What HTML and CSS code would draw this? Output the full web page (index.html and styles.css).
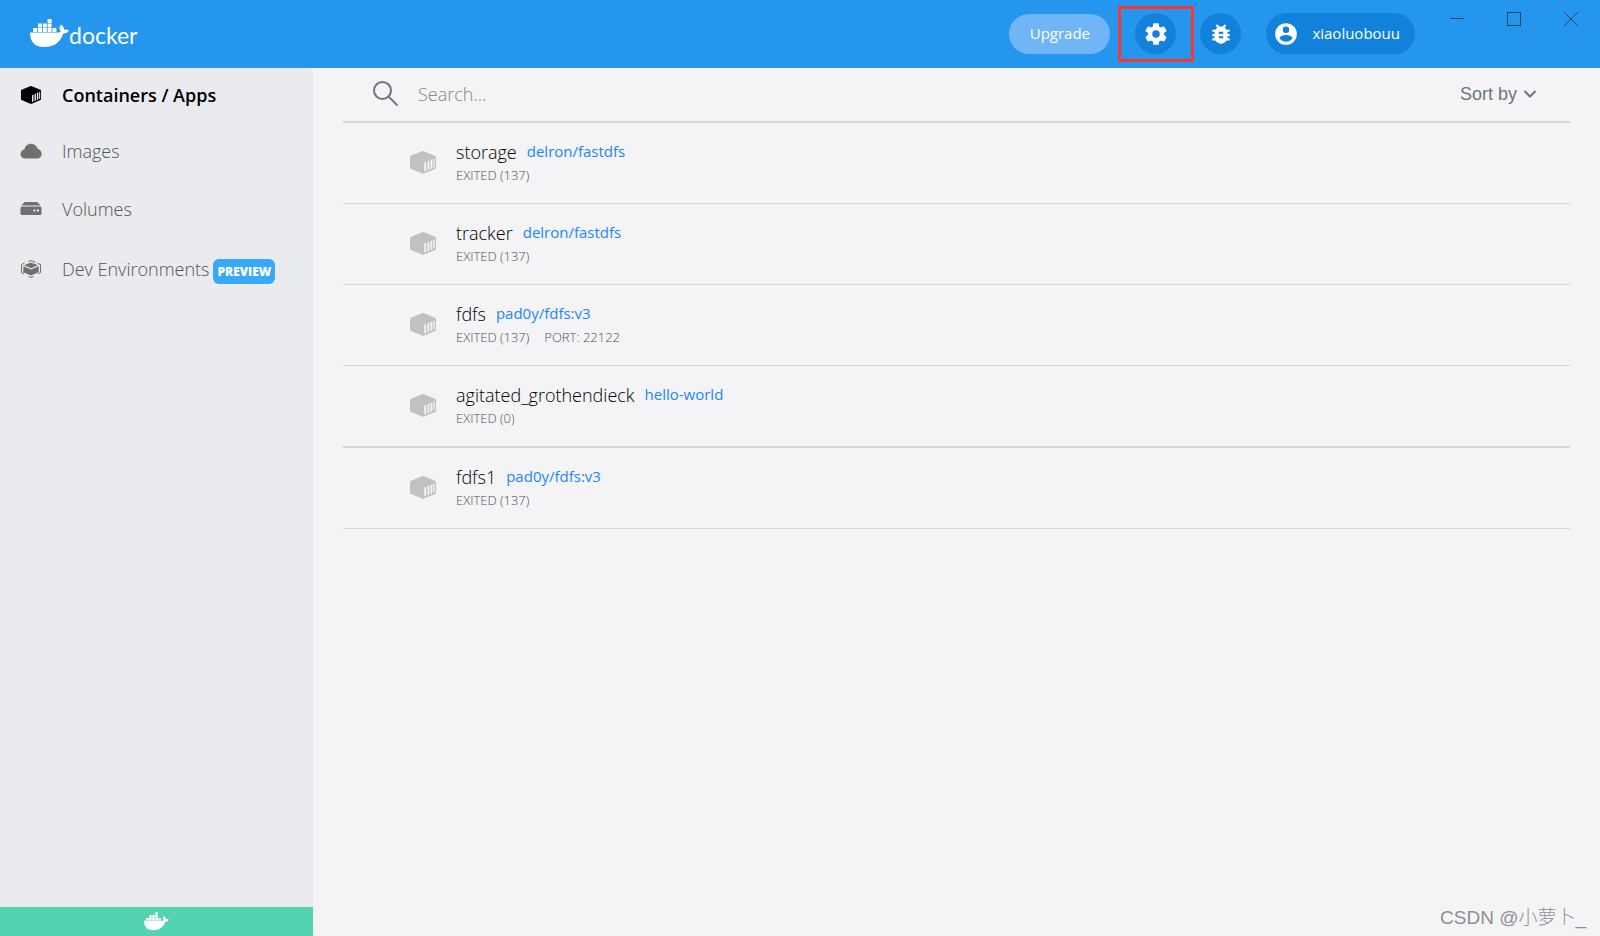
FILE: index.html
```html
<!DOCTYPE html>
<html lang="en">
<head>
<meta charset="utf-8">
<title>Docker Desktop</title>
<link rel="stylesheet" href="styles.css">
</head>
<body>
<svg class="defs" aria-hidden="true">
  <symbol id="whale" viewBox="0 0 39 29">
    <path d="M0 13.500h27.500c1.700 0 2.700-.5 3.300-1.100-1.700-2-1.600-4.700.1-6.800 2 1.400 3.100 3 3.200 5.100 1.700-.4 3.400-.1 4.900.9-1 2-2.900 2.900-5.600 2.900C30.200 23.800 23.700 28 14 28 4.800 28 0 23 0 13.500z"/>
    <path d="M3.200 9h4v4h-4zM8 9h4v4H8zM12.800 9h4v4h-4zM17.600 9h4v4h-4zM22.400 9h4v4h-4zM8 4.500h4v4H8zM12.800 4.500h4v4h-4zM17.600 4.500h4v4h-4zM17.600 0h4v4h-4z"/>
  </symbol>
  <symbol id="container" viewBox="0 0 26 23">
    <path fill-rule="evenodd" d="M12 .3a2.500 2.500 0 0 1 2 0l11 4.500q1 .5 1 1.500v10.200q0 1-1 1.500l-11 4.600a2.500 2.500 0 0 1-2 0L1 18q-1-.5-1-1.500V6.300q0-1 1-1.500zM14.300 11.700v8.800l1.800-.7V11zM17.500 10.400v8.800l1.800-.7V9.700zM20.500 9.100v8.800l1.800-.7V8.400zM23.400 7.900v8.700l1.300-.5V7.400z"/>
  </symbol>
</svg>
<header class="topbar">
  <a class="brand" href="#" aria-label="Docker home">
    <svg class="brand-whale"><use href="#whale"/></svg>
    <span class="brand-name">docker</span>
  </a>
  <div class="actions">
    <button class="upgrade">Upgrade</button>
    <div class="highlight">
      <button class="round" aria-label="Settings">
        <svg viewBox="0 0 24 24" class="gear"><path d="M19.430 12.980c.04-.32.07-.64.07-.98s-.03-.66-.07-.98l2.110-1.650c.19-.15.24-.42.12-.64l-2-3.460c-.12-.22-.39-.3-.61-.22l-2.490 1c-.52-.4-1.080-.73-1.690-.98l-.38-2.650C14.460 2.180 14.250 2 14 2h-4c-.25 0-.46.18-.49.42l-.38 2.650c-.61.25-1.170.59-1.690.98l-2.490-1c-.23-.09-.49 0-.61.22l-2 3.460c-.13.22-.07.49.12.64l2.110 1.650c-.04.32-.07.65-.07.98s.03.66.07.98l-2.110 1.650c-.19.15-.24.42-.12.64l2 3.460c.12.22.39.3.61.22l2.490-1c.52.4 1.080.73 1.690.98l.38 2.650c.03.24.24.42.49.42h4c.25 0 .46-.18.49-.42l.38-2.650c.61-.25 1.170-.59 1.690-.98l2.490 1c.23.09.49 0 .61-.22l2-3.460c.12-.22.07-.49-.12-.64zM12 15.500a3.500 3.500 0 1 1 0-7 3.500 3.500 0 0 1 0 7z"/></svg>
      </button>
    </div>
    <button class="round" aria-label="Troubleshoot">
      <svg viewBox="0 0 24 24" class="bug"><path d="M20 8h-2.810c-.45-.78-1.070-1.450-1.820-1.960L17 4.410 15.590 3l-2.170 2.170a6 6 0 0 0-2.830 0L8.410 3 7 4.410l1.620 1.630C7.880 6.550 7.260 7.220 6.810 8H4v2h2.090c-.05.33-.09.66-.09 1v1H4v2h2v1c0 .34.04.67.09 1H4v2h2.810a6 6 0 0 0 10.380 0H20v-2h-2.090c.05-.33.09-.66.09-1v-1h2v-2h-2v-1c0-.34-.04-.67-.09-1H20zm-6 8h-4v-2h4zm0-4h-4v-2h4z"/></svg>
    </button>
    <button class="account">
      <svg viewBox="0 0 24 24" class="avatar"><path d="M12 2a10 10 0 1 0 0 20 10 10 0 0 0 0-20zm0 3a3 3 0 1 1 0 6 3 3 0 0 1 0-6zm0 14.200a7.200 7.200 0 0 1-6-3.220c.03-1.990 4-3.080 6-3.080s5.970 1.090 6 3.080a7.200 7.200 0 0 1-6 3.220z"/></svg>
      <span>xiaoluobouu</span>
    </button>
  </div>
  <div class="window-controls">
    <button aria-label="Minimize"><svg viewBox="0 0 14 14"><path d="M0 6.500h14"/></svg></button>
    <button aria-label="Maximize"><svg viewBox="0 0 14 14"><path d="M.5.5h13v13H.5z"/></svg></button>
    <button aria-label="Close"><svg viewBox="0 0 14 14"><path d="M.5.5l13 13M13.500.5l-13 13"/></svg></button>
  </div>
</header>
<div class="body">
  <aside class="sidebar">
    <nav class="nav">
      <a class="nav-item active" href="#"><svg viewBox="0 0 26 23"><use href="#container"/></svg><span>Containers / Apps</span></a>
      <a class="nav-item" href="#"><svg viewBox="0 0 22 18"><path d="M5.200 16.500C2 16.500.5 14.400.5 12c0-2.300 1.500-4.100 3.900-4.500C5 4 7.600 1.800 11 1.800s5.800 2.100 6.700 5.100c2.500.4 3.900 2.400 3.900 4.800 0 2.700-1.800 4.800-4.800 4.800z"/></svg><span>Images</span></a>
      <a class="nav-item" href="#"><svg viewBox="0 0 22 18"><path d="M5.500 2h11q1 0 1.600.7L20.500 5.500h-19L3.900 2.700Q4.500 2 5.500 2z"/><path fill-rule="evenodd" d="M2 6.500h18q1.500 0 1.500 1.500v5.500q0 1.500-1.500 1.500H2q-1.500 0-1.500-1.500V8q0-1.500 1.500-1.500zm11.500 3v2h2v-2zm3.500 0v2h2v-2z"/></svg><span>Volumes</span></a>
      <a class="nav-item dev" href="#"><svg viewBox="0 0 22 18"><path d="M11 2.600l7 2.700-7 3-7-3zM3.300 6.200l7.700 3.300 7.700-3.300v6L11 15.600l-7.700-3.400z"/><path class="line" d="M4.500 3.200L1.500 4.600v8L4 13.800M17.500 3.200l3 1.400v8L18 13.800M8.500 1.500L11 .6l4.500 1.700M8.500 16.400l2.500 1.100 2.500-1.100"/></svg><span>Dev Environments</span><span class="badge">PREVIEW</span></a>
    </nav>
    <footer class="status"><svg><use href="#whale"/></svg></footer>
  </aside>
  <main class="content">
    <div class="toolbar">
      <label class="search">
        <svg viewBox="0 0 26 26"><circle cx="9.500" cy="9.500" r="8.500"/><path d="M15.600 15.600l9 9"/></svg>
        <input type="text" placeholder="Search..." aria-label="Search">
      </label>
      <button class="sort">Sort by <svg viewBox="0 0 14 10"><path d="M1.500 2l5.500 5.500L12.500 2"/></svg></button>
    </div>
    <ul class="list">
      <li class="row"><svg><use href="#container"/></svg><div><p class="title">storage <a href="#">delron/fastdfs</a></p><p class="meta"><span>EXITED (137)</span></p></div></li>
      <li class="row"><svg><use href="#container"/></svg><div><p class="title">tracker <a href="#">delron/fastdfs</a></p><p class="meta"><span>EXITED (137)</span></p></div></li>
      <li class="row"><svg><use href="#container"/></svg><div><p class="title">fdfs <a href="#">pad0y/fdfs:v3</a></p><p class="meta"><span>EXITED (137)</span><span>PORT: 22122</span></p></div></li>
      <li class="row group-end"><svg><use href="#container"/></svg><div><p class="title">agitated_grothendieck <a href="#">hello-world</a></p><p class="meta"><span>EXITED (0)</span></p></div></li>
      <li class="row"><svg><use href="#container"/></svg><div><p class="title">fdfs1 <a href="#">pad0y/fdfs:v3</a></p><p class="meta"><span>EXITED (137)</span></p></div></li>
    </ul>
    <p class="watermark">CSDN @小萝卜_</p>
  </main>
</div>
</body>
</html>
```
FILE: styles.css
```css
* { box-sizing: border-box; }
body {
  margin: 0;
  min-height: 100vh;
  display: flex;
  flex-direction: column;
  background: #f4f4f6;
  font-family: "Open Sans", sans-serif;
  font-weight: 300;
}
button { border: 0; padding: 0; background: none; font: inherit; color: inherit; cursor: pointer; }
a { text-decoration: none; }
p, ul { margin: 0; padding: 0; list-style: none; }
svg { flex: none; fill: currentColor; }
.defs { position: absolute; width: 0; height: 0; }

.topbar { height: 68px; display: flex; align-items: center; background: #2496ed; color: #fff; }
.brand { display: flex; align-items: center; margin: 0 auto 0 30px; padding-bottom: 2px; color: #fff; }
.brand-whale { width: 39px; height: 29px; }
.brand-name { font: 400 23px/28px Lato, sans-serif; padding-top: 4px; }
.actions { display: flex; align-items: center; padding-bottom: 1px; font-size: 15px; line-height: 20px; font-weight: 400; }
.upgrade { width: 101px; height: 40px; padding-bottom: 2px; border-radius: 20px; background: #70b5f6; margin-right: 8px; }
.highlight { width: 76px; height: 56px; border: 3px solid #fb3434; display: flex; align-items: center; padding-left: 14px; margin-right: 6px; }
.round { width: 41px; height: 41px; border-radius: 50%; background: #1181dc; display: flex; align-items: center; justify-content: center; }
.gear { width: 26px; height: 26px; }
.bug { width: 26px; height: 26px; }
.account { height: 41px; margin-left: 25px; padding: 0 15px 0 7px; border-radius: 21px; background: #1181dc; display: flex; align-items: center; gap: 13px; }
.account span { padding-bottom: 2px; }
.avatar { width: 26px; height: 26px; }
.window-controls { align-self: flex-start; display: flex; gap: 43px; margin: 12px 22px 0 35px; color: #24435f; }
.window-controls svg { display: block; width: 14px; height: 14px; fill: none; stroke: currentColor; }

.body { flex: 1; display: flex; }
.sidebar { width: 313px; flex: none; display: flex; flex-direction: column; background: #e9ebef; }
.nav { flex: 1; }
.nav-item { display: flex; align-items: center; height: 58px; padding-left: 20px; color: #555; font-size: 18px; }
.nav-item svg { width: 22px; height: 18px; margin-right: 20px; color: #707070; }
.nav-item.active, .nav-item.active svg { color: #000; }
.nav-item.active { height: 54px; font-weight: 600; }
.nav-item.dev { height: 62px; }
.line { fill: none; stroke: currentColor; }
.badge { height: 25px; margin: 4px 0 0 4px; padding: 0 4px; border-radius: 6px; background: #38a9f8; color: #fff; font-size: 12px; line-height: 25px; font-weight: 800; }
.status { height: 29px; display: flex; align-items: center; justify-content: center; background: #54d2b2; color: #fff; }
.status svg { width: 25px; height: 19px; }

.content { flex: 1; display: flex; flex-direction: column; padding: 0 30px; }
.toolbar { height: 55px; display: flex; align-items: center; padding-bottom: 2px; border-bottom: 2px solid #d5d6d8; color: #6c757d; }
.search { flex: 1; display: flex; align-items: center; gap: 19px; padding-left: 30px; }
.search svg { width: 26px; height: 26px; fill: none; stroke: currentColor; stroke-width: 2; }
.search input { flex: 1; border: 0; padding: 0; outline: 0; background: none; font: inherit; font-size: 18px; }
.search input::placeholder { color: #858585; opacity: 1; }
.sort { display: flex; align-items: center; gap: 6px; margin-right: 33px; font: 400 18px/24px "Liberation Sans", sans-serif; }
.sort svg { width: 14px; height: 10px; fill: none; stroke: currentColor; stroke-width: 2; }
.row { display: flex; align-items: center; gap: 20px; height: 81px; padding: 0 0 2px 67px; border-bottom: 1px solid #d5d6d8; }
.row.group-end { height: 82px; border-bottom-width: 2px; }
.row svg { width: 26px; height: 23px; color: #c1c1c1; }
.title { display: flex; align-items: center; gap: 10px; font-size: 18px; line-height: 26px; color: #000; }
.title a { padding-bottom: 2px; font-size: 15px; line-height: 24px; font-weight: 400; color: #1a86ff; }
.meta { display: flex; gap: 15px; font-size: 13px; line-height: 20px; color: #495057; }
.watermark { margin: auto -16px 4px auto; font: 300 19px/28px "Liberation Sans", "Noto Sans CJK SC", sans-serif; color: #8f9092; }
```
